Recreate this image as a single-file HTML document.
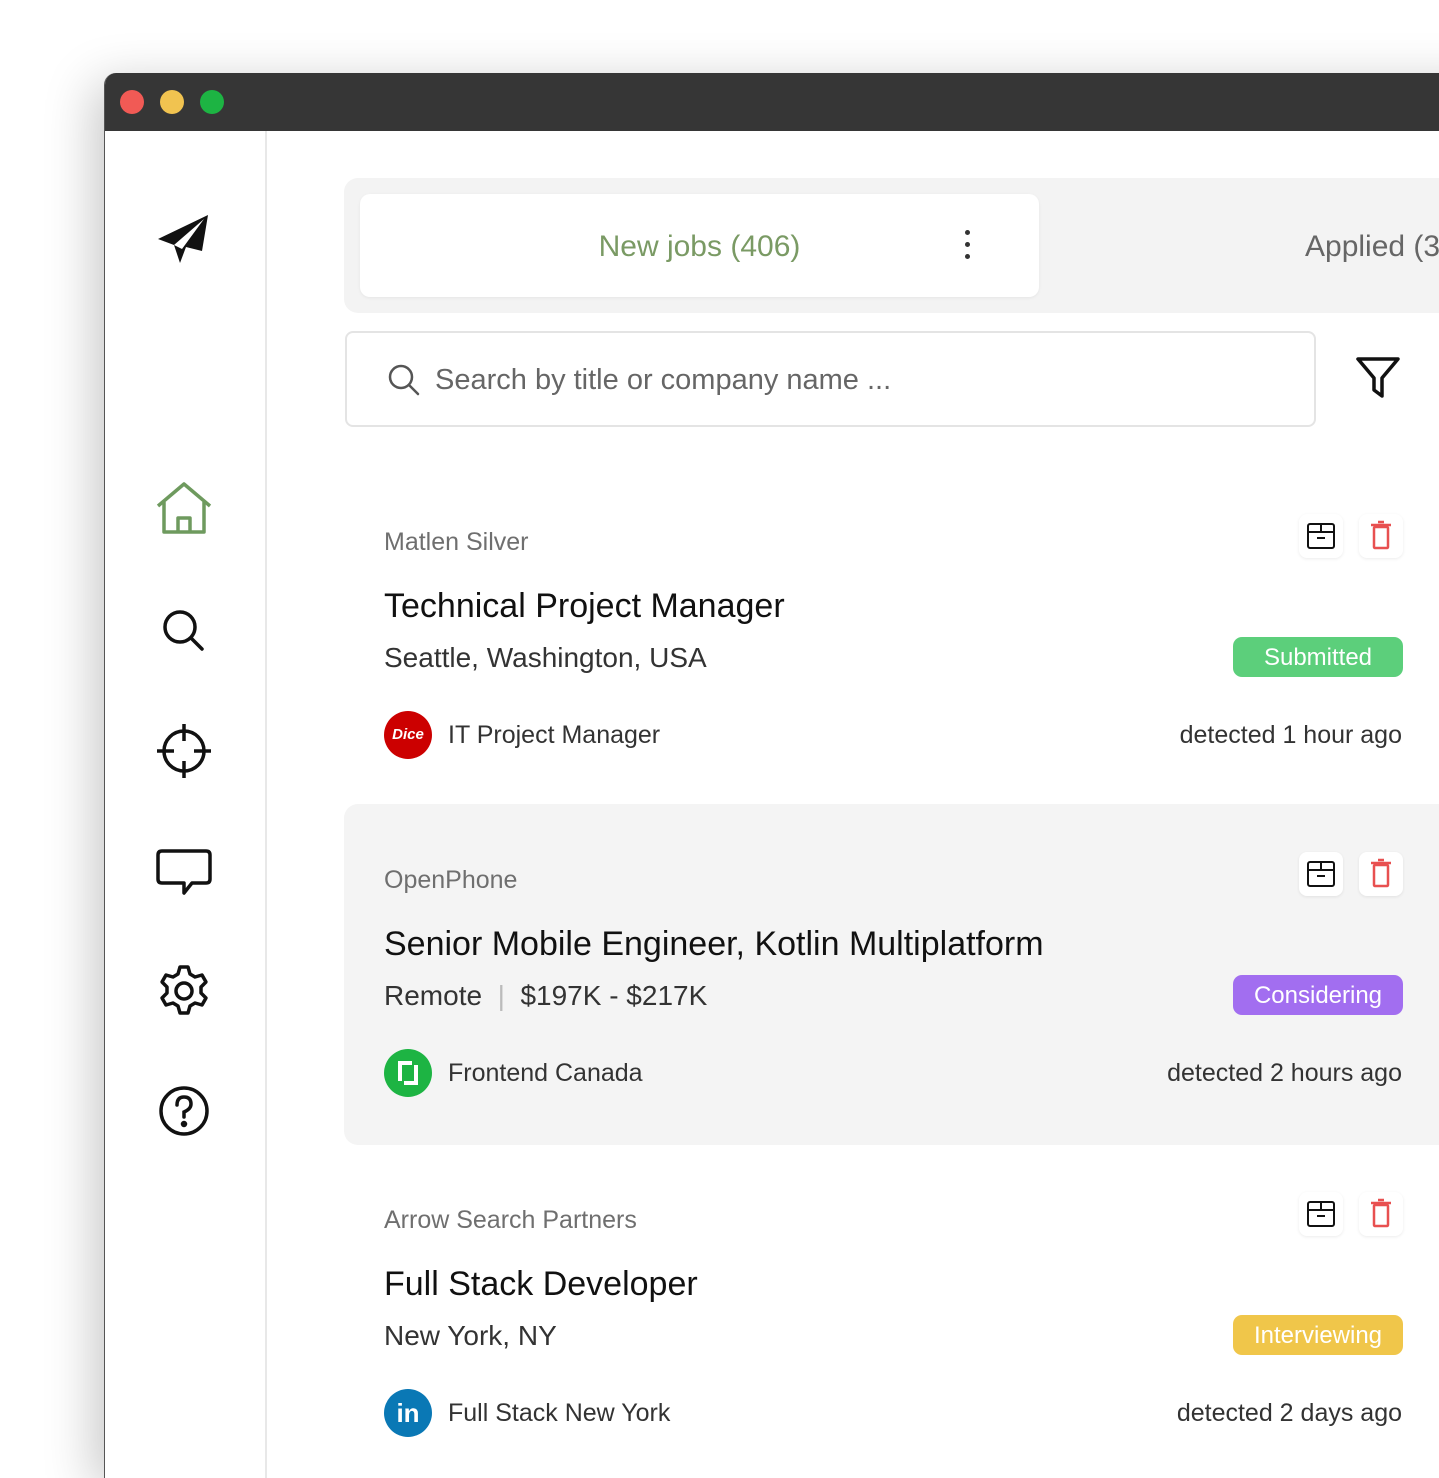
<!DOCTYPE html><html><head><style>
html,body{margin:0;width:1439px;height:1478px;overflow:hidden}
body{background:#fff;font-family:"Liberation Sans",Arial,sans-serif;position:relative}
.win{position:absolute;left:104px;top:73px;width:1400px;height:1405px;background:#fff;border-radius:12px 0 0 0;box-shadow:-10px 10px 50px rgba(0,0,0,.22);overflow:hidden;border-left:1px solid #555}
.tb{height:58px;background:#363636;position:relative}
.dot{position:absolute;top:17px;width:24px;height:24px;border-radius:50%}
.side{position:absolute;left:0;top:58px;width:160px;bottom:0;border-right:2px solid #e8e8e8}
.ic{position:absolute;left:49px}
.abs{position:absolute}
.card{position:absolute;left:239px;width:1200px;height:341px}
.co{position:absolute;left:40px;top:62px;font-size:25px;color:#6f6f6f}
.ti{position:absolute;left:40px;top:121px;font-size:34px;color:#111}
.loc{position:absolute;left:40px;top:176px;font-size:28px;color:#333}
.src{position:absolute;left:104px;top:255px;font-size:25px;color:#333}
.det{position:absolute;right:142px;top:255px;font-size:25px;color:#333}
.badge{position:absolute;left:889px;top:171px;width:170px;height:40px;border-radius:9px;color:#fff;font-size:24px;text-align:center;line-height:41px}
.logo{position:absolute;left:40px;top:245px;width:48px;height:48px;border-radius:50%}
.btn{position:absolute;top:48px;width:44px;height:44px;border-radius:8px;background:#fff;box-shadow:0 1px 3px rgba(0,0,0,.08)}
</style></head><body>
<div class="win">
<div class="tb"><div class="dot" style="left:15px;background:#f15a55"></div><div class="dot" style="left:55px;background:#f1c350"></div><div class="dot" style="left:95px;background:#1db443"></div></div>
<div class="side">
<svg class="ic" style="top:80px" width="60" height="60" viewBox="0 0 60 60"><path d="M4 28 L54 4 L48 40 L32 36 L26 52 L20 34 Z" fill="#111"/><path d="M20 34 L50 8 L28 38 Z" fill="#fff"/></svg>
<svg class="ic" style="top:349px" width="60" height="56" viewBox="0 0 60 56" fill="none" stroke="#6e9a5e" stroke-width="3.5" stroke-linejoin="round"><path d="M4 26 L30 4 L56 26"/><path d="M10 22 V52 H50 V22"/><path d="M24 52 V38 H36 V52"/></svg>
<svg class="ic" style="top:474px" width="60" height="50" viewBox="0 0 60 50" fill="none" stroke="#111" stroke-width="3.5"><circle cx="26" cy="22" r="15"/><path d="M37 33 L48 44" stroke-linecap="round"/></svg>
<svg class="ic" style="top:590px" width="60" height="60" viewBox="0 0 60 60" fill="none" stroke="#111" stroke-width="3.5"><circle cx="30" cy="30" r="20"/><path d="M30 3V20M30 40V57M3 30H20M40 30H57"/></svg>
<svg class="ic" style="top:716px" width="60" height="55" viewBox="0 0 60 55" fill="none" stroke="#111" stroke-width="3.5" stroke-linejoin="round"><path d="M8 4 H52 Q56 4 56 8 V32 Q56 36 52 36 H38 L30 46 V36 H8 Q4 36 4 32 V8 Q4 4 8 4Z"/></svg>
<svg class="ic" style="top:830px" width="60" height="60" viewBox="0 0 60 60" fill="none" stroke="#111" stroke-width="3.5" stroke-linejoin="round"><path d="M26 6h8l2 7 5 3 7-2 4 7-5 5v6l5 5-4 7-7-2-5 3-2 7h-8l-2-7-5-3-7 2-4-7 5-5v-6l-5-5 4-7 7 2 5-3z"/><circle cx="30" cy="30" r="8"/></svg>
<svg class="ic" style="top:950px" width="60" height="60" viewBox="0 0 60 60" fill="none" stroke="#111" stroke-width="3.5" stroke-linecap="round"><circle cx="30" cy="30" r="23"/><path d="M23 24 Q23 16 30 16 Q37 16 37 23 Q37 28 30 31 V36"/><circle cx="30" cy="43" r="1.5" fill="#111"/></svg>
</div>
<div class="abs" style="left:239px;top:105px;width:1200px;height:135px;background:#f3f3f3;border-radius:14px"></div>
<div class="abs" style="left:255px;top:121px;width:679px;height:103px;background:#fff;border-radius:10px;box-shadow:0 1px 3px rgba(0,0,0,.06)"><div style="position:absolute;left:0;width:679px;text-align:center;top:36px;font-size:30px;color:#7a9a64">New jobs (406)</div><div style="position:absolute;left:605px;top:36px;width:5px"><div style="width:5px;height:5px;border-radius:50%;background:#333;margin-bottom:7px"></div><div style="width:5px;height:5px;border-radius:50%;background:#333;margin-bottom:7px"></div><div style="width:5px;height:5px;border-radius:50%;background:#333"></div></div></div>
<div class="abs" style="left:1200px;top:157px;font-size:30px;color:#666;white-space:nowrap">Applied (3</div>
<div class="abs" style="left:240px;top:258px;width:967px;height:92px;border:2px solid #e4e4e4;border-radius:8px"><svg style="position:absolute;left:40px;top:30px" width="34" height="34" viewBox="0 0 34 34" fill="none" stroke="#555" stroke-width="2.5"><circle cx="14" cy="14" r="11"/><path d="M22 22 L31 31" stroke-linecap="round"/></svg><div style="position:absolute;left:88px;top:31px;font-size:29px;color:#666">Search by title or company name ...</div></div>
<svg class="abs" style="left:1250px;top:283px" width="46" height="44" viewBox="0 0 46 44" fill="none" stroke="#111" stroke-width="3.5" stroke-linejoin="round"><path d="M3 3 H43 L27 22 V40 L19 34 V22 Z"/></svg>

<div class="card" style="top:393px">
<div class="co">Matlen Silver</div><div class="ti">Technical Project Manager</div><div class="loc">Seattle, Washington, USA</div>
<div class="btn" style="left:955px"><svg width="44" height="44" viewBox="0 0 44 44" fill="none" stroke="#111" stroke-width="2"><rect x="9" y="10" width="26" height="24" rx="2"/><path d="M9 18H35M22 10V18M18 24H26"/></svg></div>
<div class="btn" style="left:1015px"><svg width="44" height="44" viewBox="0 0 44 44" fill="none" stroke="#e85050" stroke-width="2.5"><path d="M12 11H32M19 8H25"/><rect x="15" y="13" width="14" height="21" rx="1"/></svg></div>
<div class="badge" style="background:#5ccf7b">Submitted</div>
<div class="logo" style="background:#cc0000;color:#fff;font:italic bold 15px 'Liberation Sans';text-align:center;line-height:48px">Dice</div>
<div class="src">IT Project Manager</div><div class="det">detected 1 hour ago</div>
</div>
<div class="card" style="top:731px;background:#f4f4f4;border-radius:14px 0 0 14px">
<div class="co">OpenPhone</div><div class="ti">Senior Mobile Engineer, Kotlin Multiplatform</div><div class="loc">Remote <span style="color:#bbb">&nbsp;|&nbsp;</span> $197K - $217K</div>
<div class="btn" style="left:955px"><svg width="44" height="44" viewBox="0 0 44 44" fill="none" stroke="#111" stroke-width="2"><rect x="9" y="10" width="26" height="24" rx="2"/><path d="M9 18H35M22 10V18M18 24H26"/></svg></div>
<div class="btn" style="left:1015px"><svg width="44" height="44" viewBox="0 0 44 44" fill="none" stroke="#e85050" stroke-width="2.5"><path d="M12 11H32M19 8H25"/><rect x="15" y="13" width="14" height="21" rx="1"/></svg></div>
<div class="badge" style="background:#a26ef0">Considering</div>
<div class="logo" style="background:#1db443"><svg width="48" height="48" viewBox="0 0 48 48" fill="none" stroke="#fff" stroke-width="4"><path d="M28 14H16V32M20 34H32V16"/></svg></div>
<div class="src">Frontend Canada</div><div class="det">detected 2 hours ago</div>
</div>
<div class="card" style="top:1071px">
<div class="co">Arrow Search Partners</div><div class="ti">Full Stack Developer</div><div class="loc">New York, NY</div>
<div class="btn" style="left:955px"><svg width="44" height="44" viewBox="0 0 44 44" fill="none" stroke="#111" stroke-width="2"><rect x="9" y="10" width="26" height="24" rx="2"/><path d="M9 18H35M22 10V18M18 24H26"/></svg></div>
<div class="btn" style="left:1015px"><svg width="44" height="44" viewBox="0 0 44 44" fill="none" stroke="#e85050" stroke-width="2.5"><path d="M12 11H32M19 8H25"/><rect x="15" y="13" width="14" height="21" rx="1"/></svg></div>
<div class="badge" style="background:#f0c64a">Interviewing</div>
<div class="logo" style="background:#0a78b5;color:#fff;font:bold 26px 'Liberation Sans';text-align:center;line-height:48px">in</div>
<div class="src">Full Stack New York</div><div class="det">detected 2 days ago</div>
</div>
</div>
</body></html>
